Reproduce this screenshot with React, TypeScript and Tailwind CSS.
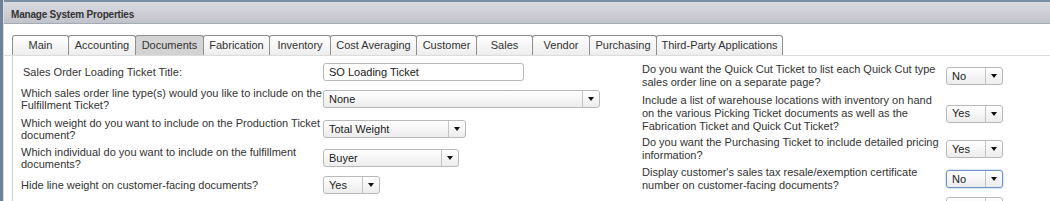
import React from "react"

const font = { fontFamily: '"Liberation Sans", Arial, sans-serif' }

const tabs = [
  { label: "Main", w: 57 },
  { label: "Accounting", w: 68 },
  { label: "Documents", w: 69, active: true },
  { label: "Fabrication", w: 67 },
  { label: "Inventory", w: 62 },
  { label: "Cost Averaging", w: 87 },
  { label: "Customer", w: 61 },
  { label: "Sales", w: 57 },
  { label: "Vendor", w: 58 },
  { label: "Purchasing", w: 68 },
  { label: "Third-Party Applications", w: 127 },
]

function Select({ value, width, focused }: { value: string; width: string; focused?: boolean }) {
  return (
    <div
      className={`flex h-[18px] ${width} shrink-0 items-stretch rounded-[3px] border bg-gradient-to-b from-white to-[#ececec] text-[11px] text-[#222] ${
        focused ? "border-[#6f93c4] shadow-[0_0_2px_rgba(80,130,200,0.7)]" : "border-[#b9b9b9]"
      }`}
    >
      <div className="flex flex-1 items-center pl-[5px]">{value}</div>
      <div className="flex w-[17px] items-center justify-center border-l border-[#c4c4c4]">
        <div className="h-0 w-0 border-x-[3px] border-t-[4px] border-x-transparent border-t-[#111]" />
      </div>
    </div>
  )
}

function Row({
  lines,
  children,
  mt,
  lw,
  lh,
}: {
  lines: string[]
  children: React.ReactNode
  mt: string
  lw: string
  lh: string
}) {
  return (
    <div className={`flex items-center ${mt}`}>
      <div className={`${lw} ${lh} shrink-0 text-[11px] text-[#333]`}>
        {lines.map((l, i) => (
          <div key={i} className="whitespace-nowrap">
            {l}
          </div>
        ))}
      </div>
      {children}
    </div>
  )
}

export default function App() {
  return (
    <div className="relative h-[201px] w-[1050px] overflow-hidden bg-white" style={font}>
      <div className="flex h-full border-l-[3px] border-[#6f8196]">
        <div className="flex flex-1 flex-col border-l border-[#d9dde2]">
          {/* title bar */}
          <div className="h-[24px] shrink-0 border-t-2 border-b border-t-[#7b8ea2] border-b-[#a3abb4] bg-gradient-to-b from-[#dadae1] to-[#c2c2cb] pl-[7px] pt-[5px] text-[10px] font-bold tracking-[-0.2px] text-[#333]">
            Manage System Properties
          </div>

          {/* tabs */}
          <div className="mt-[11px] flex border-b border-[#dcdcdc] pl-[8px]">
            {tabs.map((t) => (
              <div
                key={t.label}
                style={{ width: t.w }}
                className={`-mr-px flex h-[20px] items-center justify-center rounded-t-[3px] border border-b-0 border-[#8f8f8f] text-[11px] text-[#333] ${
                  t.active ? "bg-[#d3d3d3]" : "bg-gradient-to-b from-white to-[#ededed]"
                }`}
              >
                {t.label}
              </div>
            ))}
          </div>

          {/* content */}
          <div className="ml-[8px] flex flex-1 border-l border-[#cfcfcf] pl-[8px] pt-[8px]">
            <div className="w-[621px] shrink-0">
              <Row lines={["Sales Order Loading Ticket Title:"]} mt="-mt-px" lw="w-[302px] pl-[2px]" lh="leading-[12px]">
                <div className="flex h-[18px] w-[201px] items-center rounded-[3px] border border-[#b9b9b9] pl-[5px] text-[11px] text-[#222]">
                  SO Loading Ticket
                </div>
              </Row>
              <Row
                lines={["Which sales order line type(s) would you like to include on the", "Fulfillment Ticket?"]}
                mt="mt-[6px]"
                lw="w-[302px]"
                lh="leading-[12px]"
              >
                <Select value="None" width="w-[277px]" />
              </Row>
              <Row
                lines={["Which weight do you want to include on the Production Ticket", "document?"]}
                mt="mt-[6px]"
                lw="w-[302px]"
                lh="leading-[12px]"
              >
                <Select value="Total Weight" width="w-[143px]" />
              </Row>
              <Row
                lines={["Which individual do you want to include on the fulfillment", "documents?"]}
                mt="mt-[5px]"
                lw="w-[302px]"
                lh="leading-[12px]"
              >
                <Select value="Buyer" width="w-[136px]" />
              </Row>
              <Row lines={["Hide line weight on customer-facing documents?"]} mt="mt-[6px]" lw="w-[302px]" lh="leading-[12px]">
                <Select value="Yes" width="w-[57px]" />
              </Row>
            </div>

            <div className="flex-1 -mt-[1px]">
              <Row
                lines={["Do you want the Quick Cut Ticket to list each Quick Cut type", "sales order line on a separate page?"]}
                mt="mt-0"
                lw="w-[304px]"
                lh="leading-[13px]"
              >
                <Select value="No" width="w-[57px]" />
              </Row>
              <Row
                lines={[
                  "Include a list of warehouse locations with inventory on hand",
                  "on the various Picking Ticket documents as well as the",
                  "Fabrication Ticket and Quick Cut Ticket?",
                ]}
                mt="mt-[5px]"
                lw="w-[304px]"
                lh="leading-[13px]"
              >
                <Select value="Yes" width="w-[57px]" />
              </Row>
              <Row
                lines={["Do you want the Purchasing Ticket to include detailed pricing", "information?"]}
                mt="mt-[3px]"
                lw="w-[304px]"
                lh="leading-[13px]"
              >
                <Select value="Yes" width="w-[57px]" />
              </Row>
              <Row
                lines={["Display customer's sales tax resale/exemption certificate", "number on customer-facing documents?"]}
                mt="mt-[4px]"
                lw="w-[304px]"
                lh="leading-[13px]"
              >
                <Select value="No" width="w-[57px]" focused />
              </Row>
              <Row
                lines={["Print the sales order line comments on the fulfillment tickets?"]}
                mt="mt-[5px]"
                lw="w-[304px]"
                lh="leading-[13px]"
              >
                <Select value="No" width="w-[57px]" />
              </Row>
            </div>
          </div>
        </div>
      </div>
    </div>
  )
}
